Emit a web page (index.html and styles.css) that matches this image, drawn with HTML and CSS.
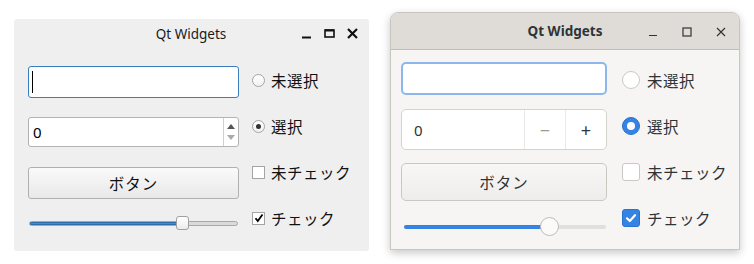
FILE: index.html
```html
<!DOCTYPE html>
<html lang="ja">
<head>
    <meta charset="UTF-8">
    <title>Qt Widgets</title>
    <link rel="stylesheet" href="styles.css">
</head>
<body>
    <!-- Fusion style -->
    <section class="fusion">
        <header class="fu-title">
            <span class="fu-caption">Qt Widgets</span>
            <div class="fu-controls">
                <svg width="11" height="11" viewBox="0 0 11 11"><path d="M1 9.5h9" stroke="#111" stroke-width="2"/></svg>
                <svg width="11" height="11" viewBox="0 0 11 11"><rect x="1" y="2" width="9" height="7" fill="none" stroke="#111" stroke-width="1.6"/><path d="M1 2.5h9" stroke="#111" stroke-width="2"/></svg>
                <svg width="11" height="11" viewBox="0 0 11 11"><path d="M1 1l9 9M10 1l-9 9" stroke="#111" stroke-width="2.2"/></svg>
            </div>
        </header>
        <div class="fu-body">
            <div class="fu-left">
                <div class="fu-edit"><span class="fu-cursor"></span></div>
                <div class="fu-spin">
                    <span class="fu-spin-val">0</span>
                    <div class="fu-arrows">
                        <svg width="8" height="5" viewBox="0 0 8 5"><path d="M0 5L4 0L8 5Z" fill="#555"/></svg>
                        <svg width="8" height="5" viewBox="0 0 8 5"><path d="M0 0L4 5L8 0Z" fill="#aaa"/></svg>
                    </div>
                </div>
                <div class="fu-button">ボタン</div>
                <div class="fu-slider">
                    <div class="fu-groove"><div class="fu-fill" style="width: 74%"></div></div>
                    <div class="fu-handle" style="left: 148px"></div>
                </div>
            </div>
            <div class="fu-right">
                <label class="fu-item"><span class="fu-radio"></span>未選択</label>
                <label class="fu-item"><span class="fu-radio on"></span>選択</label>
                <label class="fu-item"><span class="fu-check"></span>未チェック</label>
                <label class="fu-item"><span class="fu-check on">
                    <svg width="10" height="10" viewBox="0 0 10 10"><path d="M1.5 5.2L3.8 8L8.5 1.5" fill="none" stroke="#000" stroke-width="1.8"/></svg>
                </span>チェック</label>
            </div>
        </div>
    </section>

    <!-- Adwaita style -->
    <section class="adw">
        <header class="adw-title">
            <span class="adw-caption">Qt Widgets</span>
            <div class="adw-controls">
                <svg width="10" height="10" viewBox="0 0 10 10"><path d="M1 8.5h8" stroke="#2e3436" stroke-width="1.2"/></svg>
                <svg width="10" height="10" viewBox="0 0 10 10"><rect x="1" y="1" width="8" height="8" fill="none" stroke="#2e3436" stroke-width="1.2"/></svg>
                <svg width="10" height="10" viewBox="0 0 10 10"><path d="M1 1l8 8M9 1l-8 8" stroke="#2e3436" stroke-width="1.2"/></svg>
            </div>
        </header>
        <div class="adw-body">
            <div class="adw-left">
                <div class="adw-edit"></div>
                <div class="adw-spin">
                    <span class="adw-spin-val">0</span>
                    <span class="adw-spin-btn minus">−</span>
                    <span class="adw-spin-btn">+</span>
                </div>
                <div class="adw-button">ボタン</div>
                <div class="adw-slider">
                    <div class="adw-trough"><div class="adw-fill" style="width: 73%"></div></div>
                    <div class="adw-knob" style="left: 139px"></div>
                </div>
            </div>
            <div class="adw-right">
                <label class="adw-item"><span class="adw-radio"></span>未選択</label>
                <label class="adw-item"><span class="adw-radio on"></span>選択</label>
                <label class="adw-item"><span class="adw-check"></span>未チェック</label>
                <label class="adw-item"><span class="adw-check on">
                    <svg width="12" height="12" viewBox="0 0 12 12"><path d="M2 6.3L4.8 9L10 3.2" fill="none" stroke="#fff" stroke-width="2.2" stroke-linecap="round" stroke-linejoin="round"/></svg>
                </span>チェック</label>
            </div>
        </div>
    </section>
</body>
</html>
```

FILE: styles.css
```css
* {
    margin: 0;
    padding: 0;
    box-sizing: border-box;
}

body {
    width: 754px;
    height: 264px;
    background: #ffffff;
    font-family: "Noto Sans", "Noto Sans CJK JP", sans-serif;
    display: flex;
    align-items: flex-start;
    padding-left: 14px;
    gap: 21px;
    overflow: hidden;
}

/* ---------- Fusion ---------- */

.fusion {
    margin-top: 19px;
    width: 355px;
    height: 232px;
    background: #efefef;
    border-radius: 3px;
}

.fu-title {
    position: relative;
    height: 30px;
    display: flex;
    align-items: center;
    justify-content: center;
}

.fu-caption {
    font-size: 13.5px;
    color: #1a1a1a;
    margin-left: -1px;
}

.fu-controls {
    position: absolute;
    right: 11px;
    top: 9px;
    display: flex;
    gap: 12px;
}

.fu-body {
    display: flex;
    padding-left: 14px;
    gap: 13px;
}

.fu-left {
    width: 211px;
    display: flex;
    flex-direction: column;
    padding-top: 17px;
}

.fu-edit {
    height: 32px;
    background: #fff;
    border: 1px solid #3a7ec0;
    border-radius: 3px;
    padding: 4px 3px;
}

.fu-cursor {
    display: block;
    width: 1px;
    height: 22px;
    background: #000;
}

.fu-spin {
    margin-top: 19px;
    height: 30px;
    background: #fff;
    border: 1px solid #b3b3b3;
    border-radius: 3px;
    display: flex;
    align-items: center;
}

.fu-spin-val {
    flex: 1;
    padding-left: 4px;
    font-size: 15px;
    color: #000;
}

.fu-arrows {
    width: 15px;
    height: 100%;
    border-left: 1px solid #d0d0d0;
    display: flex;
    flex-direction: column;
    justify-content: space-around;
    align-items: center;
    padding: 3px 0;
}

.fu-button {
    margin-top: 20px;
    height: 32px;
    border: 1px solid #b0b0b0;
    border-radius: 3px;
    background: linear-gradient(#fafafa, #e8e8e8);
    display: flex;
    align-items: center;
    justify-content: center;
    font-size: 15.5px;
    letter-spacing: 1px;
    color: #111;
}

.fu-slider {
    position: relative;
    margin-top: 16px;
    height: 14px;
}

.fu-groove {
    position: absolute;
    left: 1px;
    right: 1px;
    top: 6px;
    height: 5px;
    background: #dadada;
    border: 1px solid #a9a9a9;
    border-radius: 3px;
    overflow: hidden;
}

.fu-fill {
    height: 100%;
    background: #3a8dde;
    border-right: 1px solid #2a6aa8;
    box-shadow: inset 0 0 0 1px #2b6eb0;
}

.fu-handle {
    position: absolute;
    top: 1px;
    width: 13px;
    height: 14px;
    background: linear-gradient(#ffffff, #ececec);
    border: 1px solid #a0a0a0;
    border-radius: 3px;
}

.fu-right {
    display: flex;
    flex-direction: column;
    gap: 24px;
    padding-top: 20px;
}

.fu-item {
    height: 22px;
    display: flex;
    align-items: center;
    gap: 6px;
    font-size: 15.5px;
    color: #111;
    letter-spacing: 0.5px;
}

.fu-radio {
    width: 13px;
    height: 13px;
    border-radius: 50%;
    border: 1px solid #a4a4a4;
    background: linear-gradient(#ffffff, #f2f2f2);
    display: flex;
    align-items: center;
    justify-content: center;
}

.fu-radio.on::after {
    content: "";
    width: 5px;
    height: 5px;
    border-radius: 50%;
    background: #333;
}

.fu-check {
    width: 13px;
    height: 13px;
    border: 1px solid #a4a4a4;
    background: #fff;
    display: flex;
    align-items: center;
    justify-content: center;
}

/* ---------- Adwaita ---------- */

.adw {
    margin-top: 12px;
    width: 350px;
    height: 238px;
    background: #f6f5f4;
    border: 1px solid #c9c6c2;
    border-radius: 8px 8px 0 0;
    box-shadow: 0 3px 8px rgba(0, 0, 0, 0.22);
    overflow: hidden;
}

.adw-title {
    position: relative;
    height: 37px;
    background: #dfdcd8;
    border-bottom: 1px solid #c1bdb9;
    display: flex;
    align-items: center;
    justify-content: center;
}

.adw-caption {
    font-size: 13.5px;
    font-weight: bold;
    color: #2e3436;
    margin-top: -1px;
}

.adw-controls {
    position: absolute;
    right: 13px;
    top: 14px;
    display: flex;
    gap: 24px;
}

.adw-body {
    display: flex;
    padding-left: 10px;
    gap: 15px;
}

.adw-left {
    width: 206px;
    display: flex;
    flex-direction: column;
    padding-top: 12px;
}

.adw-edit {
    height: 33px;
    background: #fff;
    border: 2px solid #8db6ec;
    border-radius: 5px;
}

.adw-spin {
    margin-top: 14px;
    height: 41px;
    background: #fff;
    border: 1px solid #d5d1cd;
    border-radius: 5px;
    display: flex;
    align-items: stretch;
}

.adw-spin-val {
    flex: 1;
    padding-left: 12px;
    display: flex;
    align-items: center;
    font-size: 15px;
    color: #2e3436;
}

.adw-spin-btn {
    width: 41px;
    border-left: 1px solid #ebe8e5;
    display: flex;
    align-items: center;
    justify-content: center;
    font-size: 18px;
    color: #2e3436;
}

.adw-spin-btn.minus {
    color: #999;
}

.adw-button {
    margin-top: 13px;
    height: 38px;
    border: 1px solid #cdc7c2;
    border-radius: 5px;
    background: linear-gradient(#f8f7f6, #efedeb);
    display: flex;
    align-items: center;
    justify-content: center;
    font-size: 15.5px;
    letter-spacing: 1px;
    color: #2e3436;
}

.adw-slider {
    position: relative;
    margin-top: 15px;
    height: 20px;
}

.adw-trough {
    position: absolute;
    left: 3px;
    right: 1px;
    top: 9px;
    height: 4px;
    background: #e1dedb;
    border-radius: 2px;
    overflow: hidden;
}

.adw-fill {
    height: 100%;
    background: #3584e4;
}

.adw-knob {
    position: absolute;
    top: 1px;
    width: 19px;
    height: 19px;
    border-radius: 50%;
    background: #fbfaf9;
    border: 1px solid #c0bcb8;
}

.adw-right {
    display: flex;
    flex-direction: column;
    gap: 22px;
    padding-top: 18px;
}

.adw-item {
    height: 24px;
    display: flex;
    align-items: center;
    gap: 7px;
    font-size: 15.5px;
    color: #2e3436;
    letter-spacing: 0.5px;
}

.adw-radio {
    width: 18px;
    height: 18px;
    border-radius: 50%;
    border: 1px solid #cdc7c2;
    background: #fff;
    display: flex;
    align-items: center;
    justify-content: center;
}

.adw-radio.on {
    background: #3584e4;
    border-color: #2a72cc;
}

.adw-radio.on::after {
    content: "";
    width: 8px;
    height: 8px;
    border-radius: 50%;
    background: #fff;
}

.adw-check {
    width: 18px;
    height: 18px;
    border-radius: 3px;
    border: 1px solid #cdc7c2;
    background: #fff;
    display: flex;
    align-items: center;
    justify-content: center;
}

.adw-check.on {
    background: #3584e4;
    border-color: #2a72cc;
}
```
